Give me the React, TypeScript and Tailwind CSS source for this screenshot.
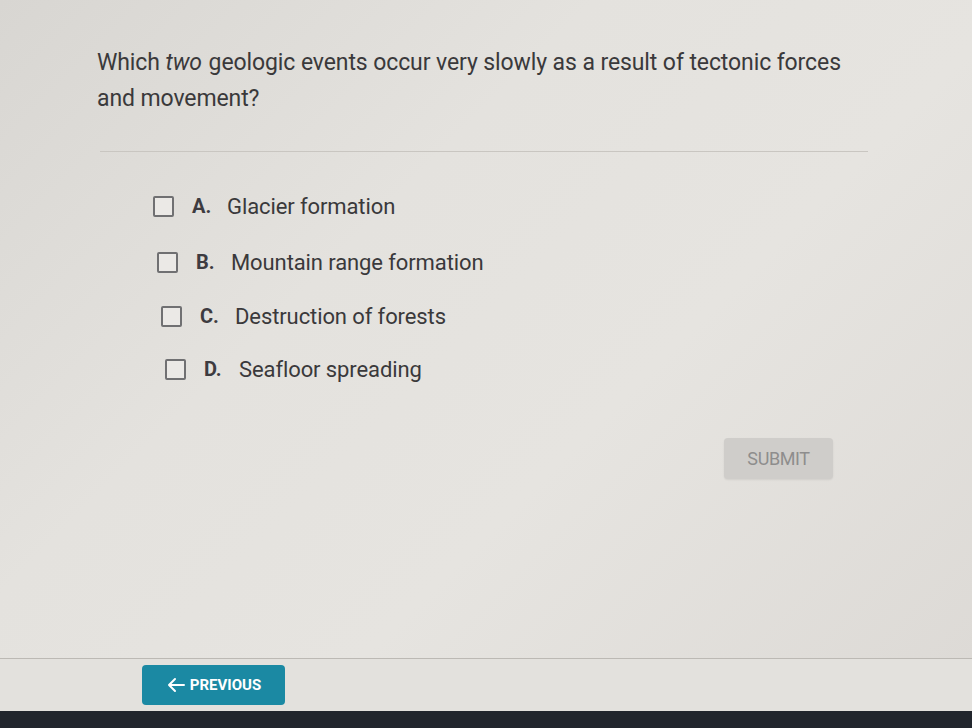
import React from "react";

const options = [
  { letter: "A.", text: "Glacier formation", ml: "ml-[153px]", mt: "mt-[43px]" },
  { letter: "B.", text: "Mountain range formation", ml: "ml-[157px]", mt: "mt-[34px]" },
  { letter: "C.", text: "Destruction of forests", ml: "ml-[161px]", mt: "mt-[32px]" },
  { letter: "D.", text: "Seafloor spreading", ml: "ml-[165px]", mt: "mt-[31px]" },
];

export default function App() {
  return (
    <div
      className="w-[972px] h-[728px] flex flex-col overflow-hidden bg-[linear-gradient(135deg,#d8d6d2_0%,#e4e2de_35%,#e6e4e0_60%,#dcd9d5_100%)] text-[#3a393b]"
      style={{ fontFamily: "Roboto, 'Noto Sans', sans-serif" }}
    >
      <div className="flex-1 flex flex-col">
        <div className="ml-[97px] mt-[45px] w-[772px] text-[23px] leading-[36px] tracking-[-0.1px]">
          Which <i className="pr-[1px]">two</i> geologic events occur very slowly as a result of tectonic forces and movement?
        </div>
        <div className="ml-[100px] mt-[34px] w-[768px] h-px bg-[#c9c6c1]" />
        {options.map((o) => (
          <div key={o.letter} className={`flex items-center h-[22px] ${o.ml} ${o.mt}`}>
            <span className="w-[21px] h-[21px] border-2 border-[#707072] rounded-[2px] bg-[#ebe9e6]" />
            <span className="ml-[18px] w-[35px] font-bold text-[20px] text-[#3d3b40]">{o.letter}</span>
            <span className="text-[22px] text-[#3a393b] tracking-[-0.1px]">{o.text}</span>
          </div>
        ))}
        <div className="flex justify-end pr-[139px] mt-[58px]">
          <div className="w-[109px] h-[41px] rounded-[4px] bg-[#cfcdca] flex items-center justify-center text-[18px] text-[#8e8d8d] tracking-[-0.4px] shadow-[0_1px_2px_rgba(0,0,0,0.08)]">
            SUBMIT
          </div>
        </div>
      </div>
      <div className="h-[53px] border-t border-[#bcb9b4] bg-[#e3e1dd] flex items-center pl-[142px]">
        <div className="w-[143px] h-[40px] rounded-[4px] bg-[#1b89a3] flex items-center justify-center gap-[4px] text-white font-bold text-[15px]">
          <svg width="20" height="16" viewBox="0 0 20 16" fill="none" stroke="white" strokeWidth="2" strokeLinecap="round" strokeLinejoin="round">
            <path d="M18 8H3M9 2L3 8l6 6" />
          </svg>
          PREVIOUS
        </div>
      </div>
      <div className="h-[17px] bg-[#22262d]" />
    </div>
  );
}
